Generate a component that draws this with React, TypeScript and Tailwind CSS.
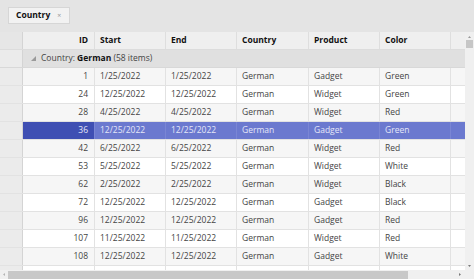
import React from "react";

const rows: [string, string, string, string, string, string][] = [
  ["1", "1/25/2022", "1/25/2022", "German", "Gadget", "Green"],
  ["24", "12/25/2022", "12/25/2022", "German", "Widget", "Green"],
  ["28", "4/25/2022", "4/25/2022", "German", "Widget", "Red"],
  ["36", "12/25/2022", "12/25/2022", "German", "Gadget", "Green"],
  ["42", "6/25/2022", "6/25/2022", "German", "Widget", "Red"],
  ["53", "5/25/2022", "5/25/2022", "German", "Widget", "White"],
  ["62", "2/25/2022", "2/25/2022", "German", "Widget", "Black"],
  ["72", "12/25/2022", "12/25/2022", "German", "Gadget", "Black"],
  ["96", "12/25/2022", "12/25/2022", "German", "Gadget", "Red"],
  ["107", "11/25/2022", "11/25/2022", "German", "Widget", "Red"],
  ["108", "12/25/2022", "12/25/2022", "German", "Gadget", "White"],
  ["115", "1/25/2022", "1/25/2022", "German", "Gadget", "Green"],
];

const cols = "grid grid-cols-[23px_72px_71px_71px_72px_71px_71px_14px]";

export default function App() {
  return (
    <div
      className="w-[474px] h-[279px] overflow-hidden bg-[#e4e4e4] text-[8.5px] leading-none text-[#333]"
      style={{ fontFamily: '"Open Sans", "Noto Sans", sans-serif' }}
    >
      {/* group panel */}
      <div className="h-[32px] flex items-center pl-[8px] bg-[#e4e4e4]">
        <div className="h-[17px] mt-[-1px] flex items-center pl-[7px] pr-[8px] gap-[7px] bg-[#f2f2f2] border border-[#d6d6d6]">
          <span className="font-bold text-[#111] text-[8.5px]">Country</span>
          <span className="text-[#999] text-[7px]">×</span>
        </div>
      </div>
      <div className="flex h-[238px]">
        <div className="w-[465px] bg-white overflow-hidden">
          {/* header */}
          <div className={`${cols} h-[18px] bg-[#efefef] border-b border-[#dcdcdc]`}>
            <div className="bg-[#e6e6e6] border-r border-[#d4d4d4]" />
            <div className="flex items-center justify-end pr-[6px] font-bold text-[#111] border-r border-[#dedede]">ID</div>
            {["Start", "End", "Country", "Product", "Color"].map((h) => (
              <div key={h} className="flex items-center pl-[5px] font-bold text-[#111] border-r border-[#dedede]">
                {h}
              </div>
            ))}
            <div />
          </div>
          {/* group row */}
          <div className="grid grid-cols-[23px_442px] h-[18px] bg-[#e0e0e0] border-b border-[#d8d8d8]">
            <div className="bg-[#ebebeb] border-r border-[#d4d4d4]" />
            <div className="flex items-center pl-[8px] text-[#444]">
              <svg width="5" height="5" viewBox="0 0 5 5" className="mr-[5px]">
                <path d="M5 0 L5 5 L0 5 Z" fill="#9a9a9a" />
              </svg>
              <span>Country:&nbsp;</span>
              <span className="font-bold text-[#111]">German</span>
              <span>&nbsp;(58 items)</span>
            </div>
          </div>
          {rows.map((r, i) => {
            const sel = r[0] === "36";
            const bg = sel ? "bg-[#6b79cf]" : i % 2 === 0 ? "bg-[#f6f6f6]" : "bg-white";
            const txt = sel ? "text-[#e4e7f8]" : "text-[#444]";
            const line = sel ? "border-[#7a86d4]" : "border-[#e2e2e2]";
            return (
              <div key={i} className={`${cols} h-[18px] ${bg} ${txt} border-b border-[#e2e2e2]`}>
                <div className="bg-[#ebebeb] border-r border-[#d4d4d4]" />
                <div className={`flex items-center justify-end pr-[6px] border-r ${line} ${sel ? "bg-[#3f4fb3]" : ""}`}>
                  {r[0]}
                </div>
                {r.slice(1).map((c, j) => (
                  <div key={j} className={`flex items-center pl-[5px] border-r ${line}`}>
                    {c}
                  </div>
                ))}
                <div />
              </div>
            );
          })}
        </div>
        {/* vertical scrollbar */}
        <div className="w-[9px] bg-[#f0f0f0] flex flex-col items-center">
          <svg width="5" height="4" viewBox="0 0 5 4" className="mt-[3px]">
            <path d="M2.5 1 L4 3 L1 3 Z" fill="#9a9a9a" />
          </svg>
          <div className="w-[7px] h-[8px] mt-[1px] bg-[#c6c6c6]" />
          <div className="flex-1" />
          <svg width="5" height="4" viewBox="0 0 5 4" className="mb-[2px]">
            <path d="M1 1 L4 1 L2.5 3 Z" fill="#7a7a7a" />
          </svg>
        </div>
      </div>
      {/* horizontal scrollbar */}
      <div className="flex h-[9px] bg-[#f0f0f0] items-center">
        <svg width="8" height="9" viewBox="0 0 8 9">
          <path d="M3 4.5 L5 3 L5 6 Z" fill="#b5b5b5" />
        </svg>
        <div className="w-[400px] h-[8px] bg-[#c8c8c8]" />
        <div className="flex-1" />
        <svg width="8" height="9" viewBox="0 0 8 9" className="mr-[10px]">
          <path d="M5 4.5 L3 3 L3 6 Z" fill="#7a7a7a" />
        </svg>
      </div>
    </div>
  );
}
